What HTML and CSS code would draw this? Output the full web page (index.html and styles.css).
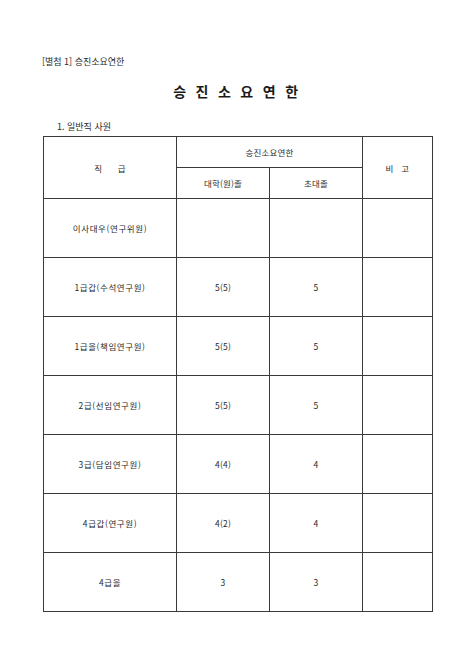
FILE: index.html
```html
<!DOCTYPE html>
<html lang="ko">
<head>
<meta charset="utf-8">
<title>승진소요연한</title>
<link rel="stylesheet" href="styles.css">
</head>
<body>
<div class="page">
  <p class="annex">[별첨 1] 승진소요연한</p>
  <h1 class="title">승 진 소 요 연 한</h1>
  <p class="section">1. 일반직 사원</p>
  <table class="grid">
    <colgroup>
      <col class="c1"><col class="c2"><col class="c3"><col class="c4">
    </colgroup>
    <thead>
      <tr class="hrow">
        <th rowspan="2" class="spaced-wide">직&nbsp;&nbsp;&nbsp;&nbsp;&nbsp;&nbsp;급</th>
        <th colspan="2">승진소요연한</th>
        <th rowspan="2" class="spaced">비&nbsp;&nbsp;&nbsp;고</th>
      </tr>
      <tr class="hrow">
        <th>대학(원)졸</th>
        <th>초대졸</th>
      </tr>
    </thead>
    <tbody>
      <tr class="brow"><td class="wide">이사대우(연구위원)</td><td></td><td></td><td></td></tr>
      <tr class="brow"><td class="wide">1급갑(수석연구원)</td><td>5(5)</td><td>5</td><td></td></tr>
      <tr class="brow"><td class="wide">1급을(책임연구원)</td><td>5(5)</td><td>5</td><td></td></tr>
      <tr class="brow"><td class="wide">2급(선임연구원)</td><td>5(5)</td><td>5</td><td></td></tr>
      <tr class="brow"><td class="wide">3급(담임연구원)</td><td>4(4)</td><td>4</td><td></td></tr>
      <tr class="brow"><td class="wide">4급갑(연구원)</td><td>4(2)</td><td>4</td><td></td></tr>
      <tr class="brow"><td class="wide">4급을</td><td>3</td><td>3</td><td></td></tr>
    </tbody>
  </table>
</div>
</body>
</html>
```
FILE: styles.css
```css
html, body {
  margin: 0;
  padding: 0;
  background: #ffffff;
}
body {
  font-family: "Noto Sans CJK KR", "Noto Sans", sans-serif;
  color: #2a2a2a;
}
.page {
  padding-top: 56px;
}
.annex {
  margin: 0 0 0 42px;
  font-size: 9px;
  line-height: 12px;
}
.title {
  margin: 13px 0 0 0;
  font-size: 14px;
  line-height: 20px;
  font-weight: 700;
  text-align: center;
  letter-spacing: 2.8px;
  color: #1a1a1a;
}
.section {
  margin: 20px 0 0 57px;
  font-size: 9px;
  line-height: 12px;
}
.grid {
  margin: 3px 0 0 43px;
  border-collapse: collapse;
  table-layout: fixed;
  width: 389px;
}
.c1 { width: 133px; }
.c2 { width: 93px; }
.c3 { width: 93px; }
.c4 { width: 70px; }
.grid th, .grid td {
  border: 1px solid #3a3a3a;
  padding: 0;
  text-align: center;
  vertical-align: middle;
  font-size: 8.5px;
  font-weight: 400;
  line-height: 12px;
  letter-spacing: 0.2px;
}
.grid td.wide {
  letter-spacing: 0.6px;
}
.hrow { height: 31px; }
.brow { height: 59px; }
.spaced-wide { padding-right: 10px; }
```
